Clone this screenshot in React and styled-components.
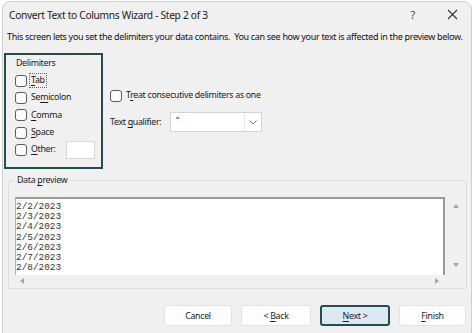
import React from "react";
import styled, { createGlobalStyle } from "styled-components";

const GlobalStyle = createGlobalStyle`
  html, body {
    margin: 0;
    padding: 0;
    background: #ffffff;
  }
  body {
    font-family: "Noto Sans", "Open Sans", "Liberation Sans", sans-serif;
    color: #1a1a1a;
  }
`;

const Page = styled.div`
  width: 474px;
  height: 333px;
  padding: 1px 0 0 2px;
  box-sizing: border-box;
  overflow: hidden;
`;

const Window = styled.div`
  width: 470px;
  height: 334px;
  box-sizing: border-box;
  border: 1px solid #cfcfcf;
  border-radius: 8px 8px 0 0;
  background: #f0f0f0;
  display: flex;
  flex-direction: column;
`;

const TitleBar = styled.div`
  height: 25px;
  display: flex;
  align-items: center;
  padding-left: 6px;
  padding-right: 2px;
`;

const Title = styled.div`
  flex: 1;
  font-size: 10.2px;
  letter-spacing: -0.3px;
  color: #1a1a1a;
`;

const TitleButton = styled.div`
  width: ${(p) => p.$w || 40}px;
  height: 25px;
  display: flex;
  align-items: center;
  justify-content: center;
  font-size: 11px;
  color: #444;
`;

const Description = styled.div`
  height: 20px;
  line-height: 20px;
  padding-left: 4px;
  font-size: 9px;
  letter-spacing: -0.32px;
  color: #111;
  white-space: nowrap;
`;

const MiddleRow = styled.div`
  display: flex;
  margin-top: 6px;
  padding-left: 1px;
  gap: 7px;
`;

const DelimiterBox = styled.div`
  width: 99px;
  height: 116px;
  box-sizing: border-box;
  border: 2px solid #1f4f50;
  padding: 0 0 0 9px;
  display: flex;
  flex-direction: column;
`;

const GroupLabel = styled.div`
  height: 16px;
  line-height: 15px;
  font-size: 8.8px;
  letter-spacing: -0.3px;
  padding-left: 1px;
  margin-top: 1px;
`;

const Row = styled.label`
  display: flex;
  align-items: center;
  height: 17.3px;
  gap: 2px;
  font-size: 8.8px;
  letter-spacing: -0.3px;
  color: #1a1a1a;
  white-space: nowrap;
`;

const Box = styled.span`
  width: 12px;
  height: 12px;
  box-sizing: border-box;
  border: 1px solid #5c5c5c;
  border-radius: 3px;
  background: #fcfcfc;
  flex: none;
`;

const Text = styled.span`
  padding: 0 1px;
  line-height: 13px;
  border: 1px dotted ${(p) => (p.$focus ? "#666" : "transparent")};
`;

const Key = styled.span`
  text-decoration: underline;
  text-underline-offset: 1.5px;
`;

const OtherInput = styled.span`
  width: 29px;
  height: 18px;
  box-sizing: border-box;
  border: 1px solid #d9d9d9;
  background: #fff;
  margin-left: 6px;
`;

const Options = styled.div`
  display: flex;
  flex-direction: column;
  padding-top: 34px;
`;

const QualifierRow = styled.div`
  display: flex;
  align-items: center;
  margin-top: 8px;
  font-size: 8.8px;
  letter-spacing: -0.3px;
  white-space: nowrap;
`;

const QualifierLabel = styled.span`
  width: 60px;
`;

const Select = styled.div`
  width: 92px;
  height: 20px;
  box-sizing: border-box;
  border: 1px solid #d4d4d4;
  background: #fff;
  display: flex;
  align-items: center;
`;

const SelectValue = styled.span`
  flex: 1;
  padding-left: 5px;
  font-family: "Liberation Sans", sans-serif;
  font-size: 9px;
  line-height: 9px;
  color: #222;
  align-self: flex-start;
  padding-top: 3px;
`;

const SelectArrow = styled.span`
  width: 16px;
  height: 18px;
  border-left: 1px solid #e6e6e6;
  display: flex;
  align-items: center;
  justify-content: center;
`;

const PreviewGroup = styled.fieldset`
  margin: 4px 4px 0 5px;
  padding: 10px 0 0 6px;
  height: 116px;
  box-sizing: border-box;
  border: 1px solid #dedede;
  border-radius: 2px;
`;

const PreviewLegend = styled.legend`
  font-size: 8.8px;
  letter-spacing: -0.3px;
  padding: 0 2px;
  line-height: 14px;
`;

const PreviewBody = styled.div`
  display: grid;
  grid-template-columns: 430px 1fr;
  grid-template-rows: 78px 12px;
`;

const Sheet = styled.div`
  background: #fff;
  border-top: 2px solid #9a9a9a;
  border-right: 2px solid #9a9a9a;
  border-left: 1px solid #b0b0b0;
  box-sizing: border-box;
  padding: 3px 0 0 0;
  font-family: "Liberation Mono", "DejaVu Sans Mono", monospace;
  font-size: 9.4px;
  line-height: 10.2px;
  color: #333;
  overflow: hidden;
`;

const VScroll = styled.div`
  display: flex;
  flex-direction: column;
  justify-content: space-between;
  align-items: center;
  padding: 7px 0 8px;
`;

const HScroll = styled.div`
  display: flex;
  justify-content: space-between;
  align-items: center;
  padding: 0 6px 0 5px;
`;

const Arrow = styled.span`
  width: 0;
  height: 0;
  border: 3.5px solid transparent;
  ${(p) =>
    p.$dir === "up"
      ? "border-bottom: 4px solid #a6a6a6; border-top-width: 0;"
      : p.$dir === "down"
      ? "border-top: 4px solid #a6a6a6; border-bottom-width: 0;"
      : p.$dir === "left"
      ? "border-right: 4px solid #a6a6a6; border-left-width: 0;"
      : "border-left: 4px solid #a6a6a6; border-right-width: 0;"}
`;

const Footer = styled.div`
  display: flex;
  justify-content: flex-end;
  gap: 9px;
  padding: 16px 5px 0 0;
`;

const Button = styled.button`
  width: ${(p) => p.$w || 70}px;
  height: 21px;
  box-sizing: border-box;
  border: ${(p) => (p.$primary ? "2px solid #1f4f50" : "1px solid #e2e2e2")};
  border-radius: 3px;
  background: ${(p) => (p.$primary ? "#dde8f3" : "#fdfdfd")};
  font-family: inherit;
  font-size: 8.8px;
  letter-spacing: -0.3px;
  color: #1a1a1a;
  padding: 0;
`;

const dates = ["2/2/2023", "2/3/2023", "2/4/2023", "2/5/2023", "2/6/2023", "2/7/2023", "2/8/2023"];

const Check = ({ children, focus }) => (
  <Row>
    <Box />
    <Text $focus={focus}>{children}</Text>
  </Row>
);

export default function App() {
  return (
    <>
      <GlobalStyle />
      <Page>
        <Window>
          <TitleBar>
            <Title>Convert Text to Columns Wizard - Step 2 of 3</Title>
            <TitleButton $w={44}>?</TitleButton>
            <TitleButton $w={34}>
              <svg width="11" height="11" viewBox="0 0 11 11">
                <path d="M1 1 L10 10 M10 1 L1 10" stroke="#333" strokeWidth="1.1" />
              </svg>
            </TitleButton>
          </TitleBar>
          <Description>
            This screen lets you set the delimiters your data contains.&nbsp; You can see how your text is affected in the preview below.
          </Description>
          <MiddleRow>
            <DelimiterBox>
              <GroupLabel>Delimiters</GroupLabel>
              <Check focus>
                <Key>T</Key>ab
              </Check>
              <Check>
                Se<Key>m</Key>icolon
              </Check>
              <Check>
                <Key>C</Key>omma
              </Check>
              <Check>
                <Key>S</Key>pace
              </Check>
              <Row>
                <Box />
                <Text>
                  <Key>O</Key>ther:
                </Text>
                <OtherInput />
              </Row>
            </DelimiterBox>
            <Options>
              <Check>
                T<Key>r</Key>eat consecutive delimiters as one
              </Check>
              <QualifierRow>
                <QualifierLabel>
                  Text <Key>q</Key>ualifier:
                </QualifierLabel>
                <Select>
                  <SelectValue>"</SelectValue>
                  <SelectArrow>
                    <svg width="8" height="5" viewBox="0 0 8 5">
                      <path d="M0.5 0.5 L4 4 L7.5 0.5" fill="none" stroke="#777" strokeWidth="1" />
                    </svg>
                  </SelectArrow>
                </Select>
              </QualifierRow>
            </Options>
          </MiddleRow>
          <PreviewGroup>
            <PreviewLegend>
              Data <Key>p</Key>review
            </PreviewLegend>
            <PreviewBody>
              <Sheet>
                {dates.map((d) => (
                  <div key={d}>{d}</div>
                ))}
              </Sheet>
              <VScroll>
                <Arrow $dir="up" />
                <Arrow $dir="down" />
              </VScroll>
              <HScroll>
                <Arrow $dir="left" />
                <Arrow $dir="right" />
              </HScroll>
            </PreviewBody>
          </PreviewGroup>
          <Footer>
            <Button $w={68}>Cancel</Button>
            <Button $w={70}>
              &lt; <Key>B</Key>ack
            </Button>
            <Button $w={70} $primary>
              <Key>N</Key>ext &gt;
            </Button>
            <Button $w={67}>
              <Key>F</Key>inish
            </Button>
          </Footer>
        </Window>
      </Page>
    </>
  );
}
